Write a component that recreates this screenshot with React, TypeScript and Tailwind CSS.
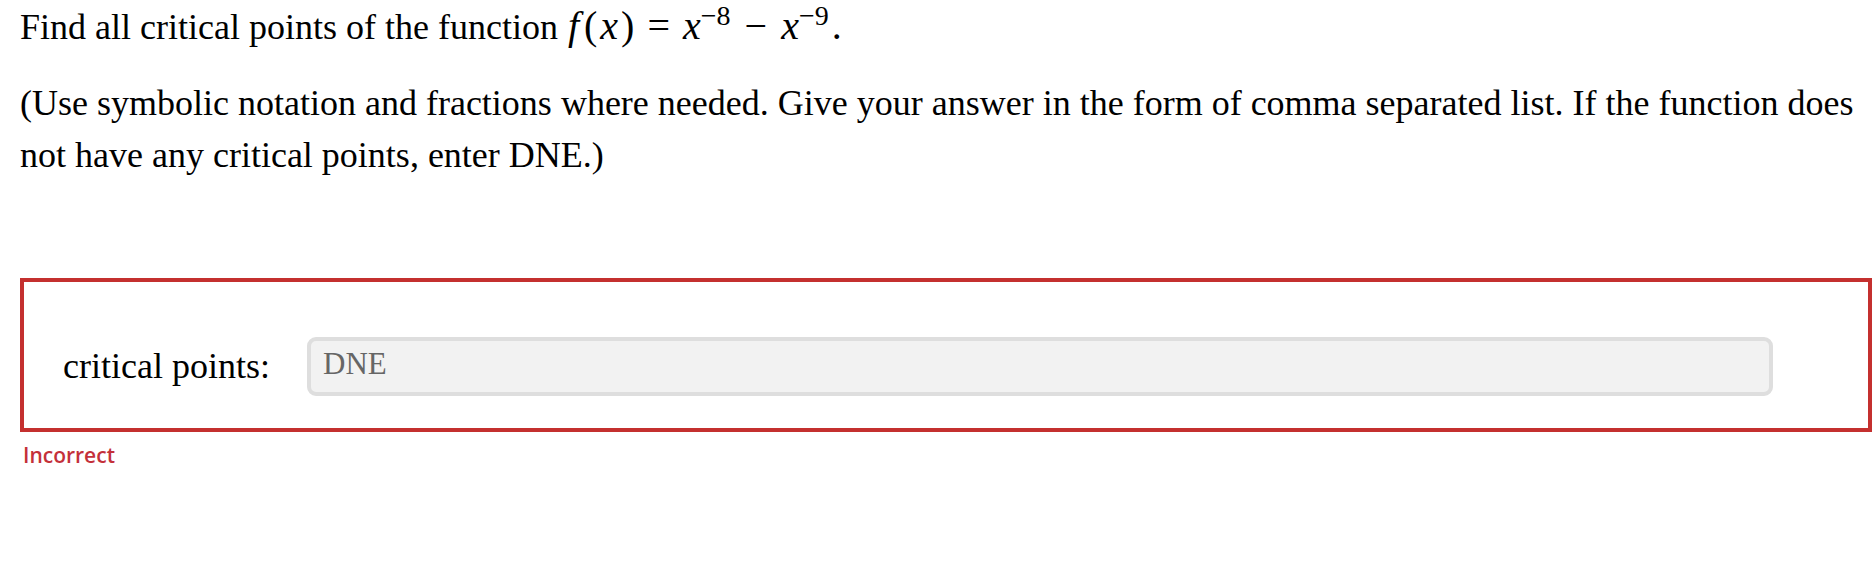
import React from 'react';

// Question prompt with an answer field marked as incorrect
const serif = { fontFamily: '"Liberation Serif", "Times New Roman", serif' };
const sans = { fontFamily: '"Open Sans", "Noto Sans", sans-serif' };

function MathExpression() {
  return (
    <span className="whitespace-nowrap text-[40px] leading-[40px]">
      <i className="ml-[1px] mr-[5px]">f</i>
      <span>(</span>
      <i className="mx-[3px]">x</i>
      <span>)</span>
      <span className="mx-[13px]">=</span>
      <i>x</i>
      <sup className="text-[0.7em]">−8</sup>
      <span className="mx-[14px]">−</span>
      <i>x</i>
      <sup className="text-[0.7em]">−9</sup>
      <span className="ml-[3px]">.</span>
    </span>
  );
}

interface AnswerFieldProps {
  label: string;
  value: string;
  status?: string;
}

function AnswerField({ label, value, status }: AnswerFieldProps) {
  return (
    <div>
      <div className="border-4 border-[#c4302f] pt-[55px] pb-[32px] pl-[39px]">
        <div className="flex items-center">
          <label className="w-[244px] shrink-0 mb-[2px] leading-[52px]">{label}</label>
          <input
            type="text"
            readOnly
            value={value}
            className="w-[1466px] h-[59px] border-4 border-[#dedede] rounded-[9px] bg-[#f2f2f2] pl-[12px] pr-[12px] pb-[6px] text-[31px] text-[#666666] outline-none"
            style={serif}
          />
        </div>
      </div>
      {status && (
        <div
          className="mt-[9px] pl-[3px] text-[21px] leading-[28px] font-semibold text-[#c4303a]"
          style={sans}
        >
          {status}
        </div>
      )}
    </div>
  );
}

export default function App() {
  return (
    <div className="min-h-[564px] bg-white">
      <div className="pl-[20px] pr-[4px] pt-[1px] text-[36px] leading-[52px] text-black" style={serif}>
        <p>
          Find all critical points of the function <MathExpression />
        </p>
        <p className="mt-[24px]">
          (Use symbolic notation and fractions where needed. Give your answer in the form of comma
          separated list. If the function does not have any critical points, enter DNE.)
        </p>
        <div className="mt-[97px]">
          <AnswerField label="critical points:" value="DNE" status="Incorrect" />
        </div>
      </div>
    </div>
  );
}
